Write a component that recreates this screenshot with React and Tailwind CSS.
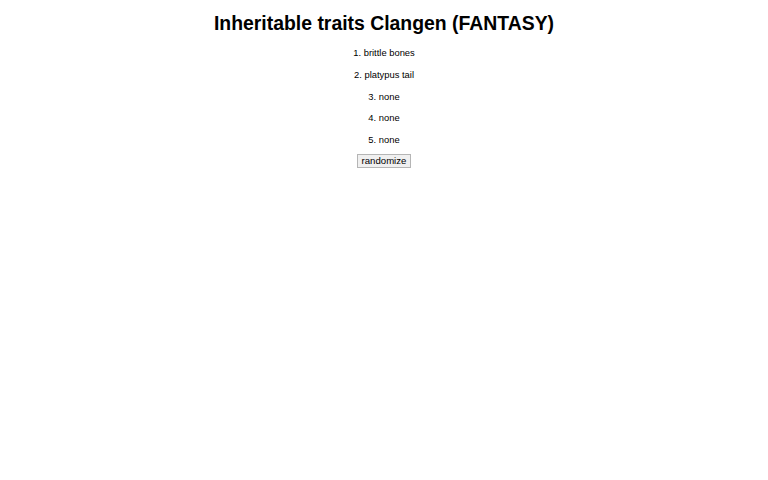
import React from 'react';

const traits = ['brittle bones', 'platypus tail', 'none', 'none', 'none'];

export default function App() {
  return (
    <div className="min-h-[480px] bg-white text-black text-center" style={{ fontFamily: '"Liberation Sans", Arial, sans-serif' }}>
      <h1 className="pt-[11px] text-[19.4px] font-bold leading-[24px]">
        Inheritable traits Clangen (FANTASY)
      </h1>
      <div className="mt-[7px] flex flex-col items-center">
        {traits.map((trait, i) => (
          <div key={i} className="h-[21.75px] text-[9.4px] leading-[21.75px]">
            {i + 1}. {trait}
          </div>
        ))}
      </div>
      <div className="flex justify-center mt-[3px]">
        <button className="h-[14px] px-[4px] border border-[#b5b5b5] bg-[#f0f0f0] text-[9.6px] leading-[12px]">
          randomize
        </button>
      </div>
    </div>
  );
}
